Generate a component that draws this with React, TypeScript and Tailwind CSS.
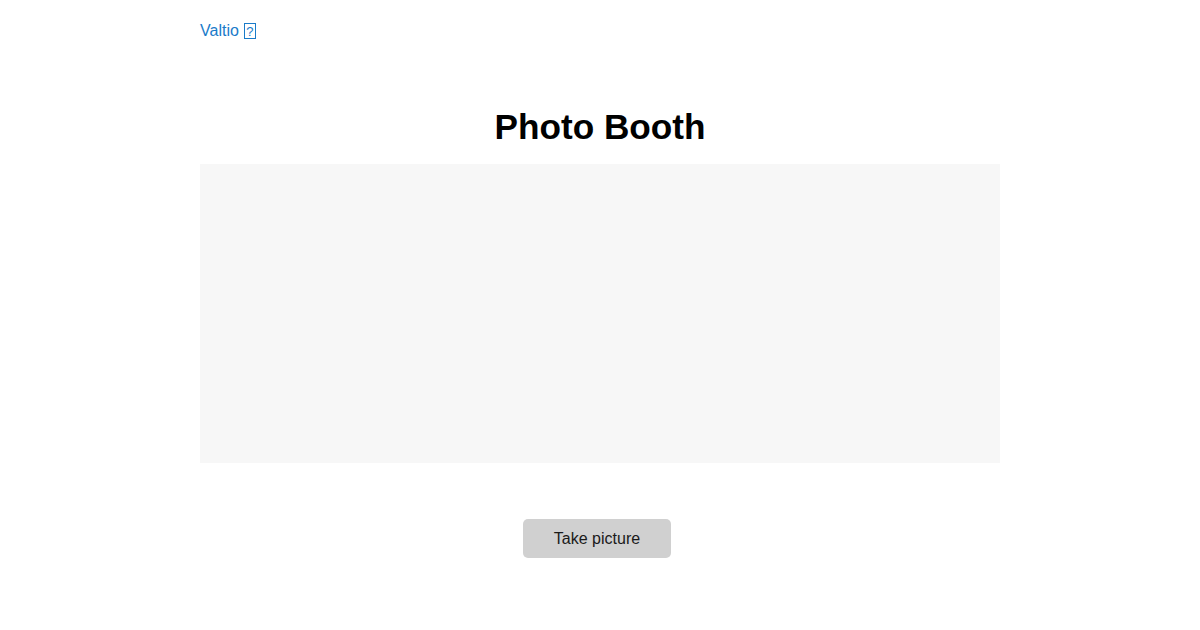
import React from "react";

export default function App() {
  return (
    <div className="min-h-[630px] bg-white font-['Liberation_Sans',Arial,sans-serif] text-black">
      <div className="w-[800px] mx-auto">
        {/* Header link */}
        <div className="pt-[22px] h-[84px]">
          <a href="#" className="flex items-center gap-[5px] text-[16px] leading-[18px] text-[#1a7bc9]">
            Valtio
            <span className="w-[12px] h-[16px] border-[1.5px] border-[#1a7bc9] flex items-center justify-center text-[13px] leading-none">
              ?
            </span>
          </a>
        </div>

        <h1 className="mt-[22px] text-[35.2px] leading-[41px] font-bold text-center">Photo Booth</h1>

        {/* Camera area */}
        <div className="mt-[17px] h-[299px] bg-[#f7f7f7]" />

        <div className="mt-[56px] flex justify-center">
          <button className="w-[148px] h-[39px] ml-[-6px] rounded-[5px] bg-[#d0d0d0] text-[16px] text-[#1a1a1a]">
            Take picture
          </button>
        </div>
      </div>
    </div>
  );
}
